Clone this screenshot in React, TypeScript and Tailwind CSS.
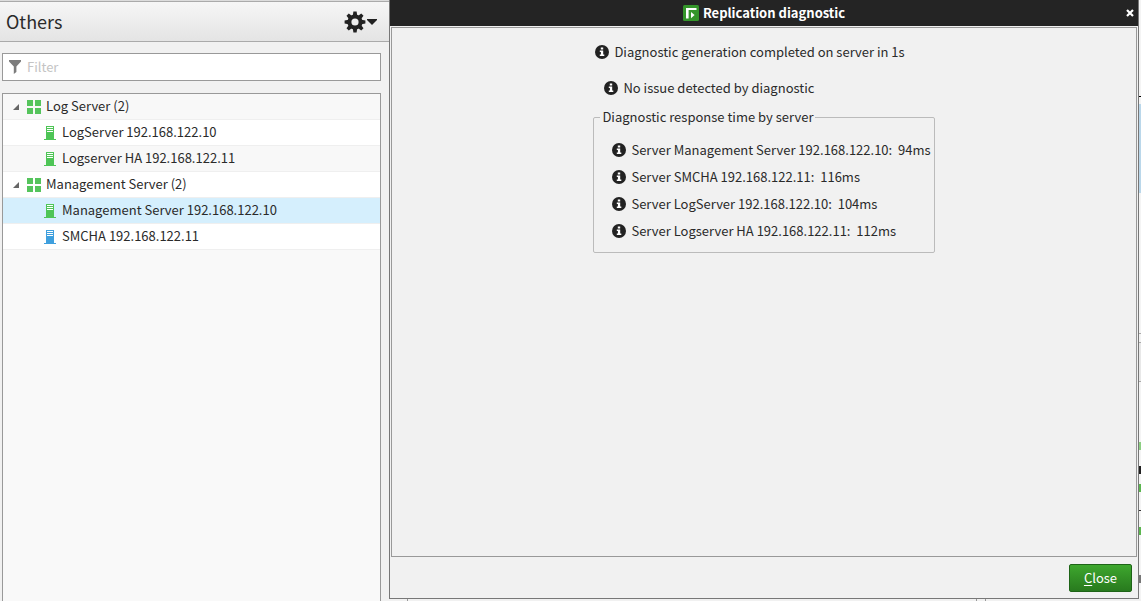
import { useState } from "react";

type Server = { name: string; color: string };
type Group = { name: string; servers: Server[] };

const groups: Group[] = [
  {
    name: "Log Server",
    servers: [
      { name: "LogServer 192.168.122.10", color: "text-[#4ec556]" },
      { name: "Logserver HA 192.168.122.11", color: "text-[#4ec556]" },
    ],
  },
  {
    name: "Management Server",
    servers: [
      { name: "Management Server 192.168.122.10", color: "text-[#4ec556]" },
      { name: "SMCHA 192.168.122.11", color: "text-[#3fa0de]" },
    ],
  },
];

const responseTimes = [
  { server: "Management Server 192.168.122.10", time: 94 },
  { server: "SMCHA 192.168.122.11", time: 116 },
  { server: "LogServer 192.168.122.10", time: 104 },
  { server: "Logserver HA 192.168.122.11", time: 112 },
];

const GearIcon = () => (
  <svg viewBox="0 0 22 22" className="h-[22px] w-[22px]" aria-hidden="true">
    <g fill="#222">
      {[0, 45, 90, 135].map(a => (
        <path key={a} d="M9.4 .6h3.2l.6 4v12.8l-.6 4H9.4l-.6-4V4.6z" transform={`rotate(${a} 11 11)`} />
      ))}
      <circle cx="11" cy="11" r="7.6" />
    </g>
    <circle cx="11" cy="11" r="3.6" fill="#eee" />
  </svg>
);

const FunnelIcon = () => (
  <svg viewBox="0 0 12 14" className="h-[14px] w-3 shrink-0" aria-hidden="true">
    <path d="M0 0h12v1.6L7.4 6.6V12L4.8 14V6.6L0 1.6z" fill="#7c7c7c" />
  </svg>
);

const GroupIcon = () => (
  <svg viewBox="0 0 14 14" className="h-[14px] w-[14px] shrink-0" aria-hidden="true">
    <path d="M0 0h6v6H0zM8 0h6v6H8zM0 8h6v6H0zM8 8h6v6H8z" fill="#55c45c" />
  </svg>
);

const ServerIcon = ({ color }: { color: string }) => (
  <svg viewBox="0 0 12 14" className={`h-[14px] w-3 shrink-0 ${color}`} aria-hidden="true">
    <path d="M2 0h8v13h2v1H0v-1h2z" fill="currentColor" />
    <path d="M3 1h6v1H3zM3 3h6v1H3zM3 5h6v1H3z" fill="#fff" />
  </svg>
);

const InfoIcon = () => (
  <svg viewBox="0 0 14 14" className="h-[14px] w-[14px] shrink-0" aria-hidden="true">
    <circle cx="7" cy="7" r="7" fill="#222" />
    <path d="M5.8 2.6h2.4v2H5.8zM4.8 5.6h3.4v4h1.1v1.5H4.8V9.6h1.1V7.1H4.8z" fill="#fff" />
  </svg>
);

const AppIcon = () => (
  <svg viewBox="0 0 16 16" className="h-4 w-4" aria-hidden="true">
    <rect width="16" height="16" rx="1.5" fill="#34952a" />
    <path d="M3 3h10.5v2H5.6v8.6H3z" fill="#fff" />
    <path d="M8 7l3.6 3L8 13.2z" fill="#fff" />
  </svg>
);

const Message = ({ text }: { text: string }) => (
  <p className="flex items-center gap-[5px] leading-[27px] whitespace-pre">
    <InfoIcon />
    {text}
  </p>
);

const Sidebar = () => {
  const [selected, setSelected] = useState("Management Server 192.168.122.10");

  return (
    <aside className="flex w-[389px] shrink-0 flex-col border-t border-[#dcdcdc]">
      <header className="flex h-[41px] items-center justify-between border-t border-b border-[#aaa] bg-linear-to-b from-[#f6f6f6] to-[#e4e4e4] pr-3 pl-[6px]">
        <h1 className="pb-0.5 text-[18px] leading-6">Others</h1>
        <button type="button" aria-label="Settings" className="flex items-center gap-px">
          <GearIcon />
          <svg viewBox="0 0 10 6" className="h-[6px] w-[10px]" aria-hidden="true">
            <path d="M0 0h10v1L5 6 0 1z" fill="#222" />
          </svg>
        </button>
      </header>
      <label className="mt-[11px] mr-2 ml-[2px] flex h-7 items-center gap-[6px] border border-[#999] bg-white px-[6px]">
        <FunnelIcon />
        <input
          type="text"
          aria-label="Filter"
          placeholder="Filter"
          className="min-w-0 flex-1 outline-none placeholder:text-[#c4c4c4]"
        />
      </label>
      <ul className="mt-3 mr-2 ml-[2px] flex-1 border border-b-0 border-[#999] bg-[#f9f9f9]">
        {groups.map((group, i) => (
          <li key={group.name}>
            <div className={`flex h-[26px] items-center border-b border-[#efefef] pl-[10px] ${i === 0 ? "bg-[#f8f8f8]" : "bg-white"}`}>
              <svg viewBox="0 0 6 6" className="mr-2 h-[6px] w-[6px]" aria-hidden="true">
                <path d="M6 0v6H0z" fill="#666" />
              </svg>
              <GroupIcon />
              <span className="ml-[5px] pb-0.5">{group.name} ({group.servers.length})</span>
            </div>
            <ul>
              {group.servers.map((server, j) => (
                <li key={server.name}>
                  <button
                    type="button"
                    onClick={() => setSelected(server.name)}
                    className={`flex h-[26px] w-full items-center gap-[6px] border-b border-[#efefef] pl-[41px] text-left ${
                      selected === server.name ? "bg-[#d5effd]" : i === 0 && j === 1 ? "bg-[#f8f8f8]" : "bg-white"
                    }`}
                  >
                    <ServerIcon color={server.color} />
                    <span className="pb-0.5">{server.name}</span>
                  </button>
                </li>
              ))}
            </ul>
          </li>
        ))}
      </ul>
    </aside>
  );
};

const DiagnosticDialog = () => (
  <section role="dialog" aria-labelledby="dialog-title" className="flex min-w-0 flex-1 flex-col border-x border-b border-[#777] bg-[#f1f1f1]">
    <header className="flex h-[26px] items-center bg-[#242424] text-white">
      <div className="flex flex-1 items-center justify-center gap-1 pl-3">
        <AppIcon />
        <h2 id="dialog-title" className="font-bold">Replication diagnostic</h2>
      </div>
      <button type="button" aria-label="Close dialog" className="mr-1 w-2">
        <svg viewBox="0 0 8 8" className="h-2 w-2" aria-hidden="true">
          <path d="M1 1l6 6M7 1L1 7" stroke="#fff" strokeWidth="2.2" />
        </svg>
      </button>
    </header>
    <div className="mx-px mt-px flex-1 border border-[#999]">
      <div className="mx-auto mt-[10px] w-fit">
        <div className="pl-[2px]">
          <Message text="Diagnostic generation completed on server in 1s" />
        </div>
        <div className="mt-[9px] pl-[11px]">
          <Message text="No issue detected by diagnostic" />
        </div>
        <fieldset className="mt-[6px] rounded-xs border border-[#bbb] pr-[3px] pb-2 pl-[18px]">
          <legend className="-ml-3 px-[2px] leading-5">Diagnostic response time by server</legend>
          <div className="mt-[9px]">
            {responseTimes.map(r => (
              <Message key={r.server} text={`Server ${r.server}:  ${r.time}ms`} />
            ))}
          </div>
        </fieldset>
      </div>
    </div>
    <footer className="flex h-[41px] items-center justify-end pr-[6px]">
      <button
        type="button"
        className="h-7 w-[63px] rounded-xs border border-[#1e6417] bg-linear-to-b from-[#3ea72e] to-[#287a1e] text-white"
      >
        <span className="underline underline-offset-2">C</span>lose
      </button>
    </footer>
  </section>
);

// sliver of the window behind the dialog
const Backdrop = () => (
  <div className="flex w-[2px] shrink-0 flex-col bg-[#f4f4f4]" aria-hidden="true">
    <div className="mt-24 h-px bg-black" />
    <div className="mt-[7px] h-[89px] bg-[#bad7ea]" />
    <div className="mt-[140px] h-[10px] border-y border-[#aaa]" />
    <div className="h-[39px] border-b border-[#aaa] bg-[#e8e8e8]" />
    <div className="mt-[60px] h-2 bg-[#8ccf82]" />
    <div className="mt-4 h-2 bg-[#222]" />
    <div className="mt-[10px] h-2 bg-[#5bb64f]" />
    <div className="mt-[18px] h-px bg-[#333]" />
    <div className="mt-4 h-2 bg-[#5bb64f]" />
    <div className="mt-10 h-2 bg-[#777]" />
  </div>
);

const App = () => (
  <div className="flex h-screen flex-col bg-[#f1f1f1] font-['Noto_Sans_CJK_SC',sans-serif] text-[13px] leading-5 text-[#2a2a2a]">
    <main className="flex min-h-0 flex-1">
      <Sidebar />
      <div className="flex min-w-0 flex-1 flex-col">
        <div className="flex min-h-0 flex-1">
          <DiagnosticDialog />
          <Backdrop />
        </div>
        <div className="flex h-[2px] gap-2 pl-[18px]">
          <div className="flex-1 border-x border-[#999]" />
          <div className="w-[156px] border-l border-[#999]" />
        </div>
      </div>
    </main>
  </div>
);

export default App;
